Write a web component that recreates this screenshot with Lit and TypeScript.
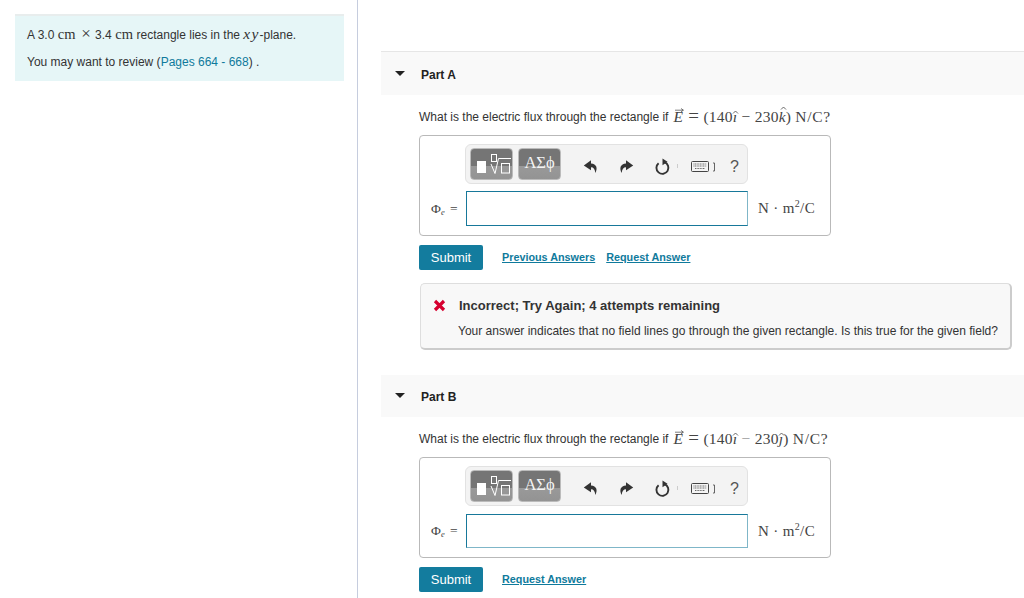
import { LitElement, html, css, svg } from "lit";
import { customElement } from "lit/decorators.js";

const undo = svg`<path d="M8 0.3 L0.8 5.6 L8 10.3 V7.2 C10.6 7.2 12 9 12.3 13 C15 8.5 13.6 3.8 8 3.6 Z" fill="#333"/>`;
const redo = svg`<path d="M7 0.3 L14.2 5.6 L7 10.3 V7.2 C4.4 7.2 3 9 2.7 13 C0 8.5 1.4 3.8 7 3.6 Z" fill="#333"/>`;

@customElement("app-root")
export class AppRoot extends LitElement {
  static styles = css`
    :host { display: block; width: 1024px; height: 598px; overflow: hidden; background: #fff; font-family: "Liberation Sans", Arial, sans-serif; font-size: 12px; color: #333; }
    .page { display: flex; height: 598px; }
    .left { box-sizing: border-box; padding: 14px 13px 0 15px; border-right: 1px solid #c6cdde; flex: none; width: 358px; }
    .intro { background: #e6f6f7; border-top: 2px solid #e8eded; height: 67px; box-sizing: border-box; padding: 11px 12px 0; line-height: 16px; }
    .intro p { margin: 0 0 11px; white-space: nowrap; }
    .m { font-family: "Liberation Serif", serif; font-size: 14.5px; line-height: 0; letter-spacing: .2px; }
    .xy { font-size: 15.5px; letter-spacing: 1.2px; }
    .times { font-family: "Liberation Serif", serif; font-size: 17px; line-height: 0; margin: 0 1px 0 2px; }
    .i { font-style: italic; }
    a { color: #0f7a9c; text-decoration: none; }
    .right { flex: 1; padding: 51px 0 0 23px; min-width: 0; }
    .head { height: 44px; box-sizing: border-box; background: #f9f9f9; border-top: 1px solid #e6e6e6; display: flex; align-items: center; padding: 2px 0 0 14px; gap: 16px; font-weight: 700; color: #222; }
    .head.b { height: 42px; border-top: 0; margin-top: 25px; }
    .tri { width: 0; height: 0; border-left: 5px solid transparent; border-right: 5px solid transparent; border-top: 5px solid #222; margin-top: -3px; }
    .body { padding-left: 38px; }
    .q { height: 40px; display: flex; align-items: center; white-space: pre; padding-top: 3px; box-sizing: border-box; }
    .q .m { font-size: 15.5px; line-height: normal; margin-left: 5px; letter-spacing: .25px; color: #444; }
    .eq { font-size: 19px; line-height: 0; margin-left: -2px; }
    .wide { letter-spacing: .7px; }
    .arrow { position: relative; display: inline-block; }
    .vec { position: absolute; left: 2px; top: 0; width: 9px; height: 4px; }
    .hat { position: relative; display: inline-block; }
    .hat svg { position: absolute; left: -1px; top: 2px; width: 7px; height: 4px; }
    .hat.tall svg { left: 1px; top: -2px; }
    .box { width: 412px; height: 101px; box-sizing: border-box; border: 1px solid #b9b9b9; border-radius: 4px; padding: 8px 0 0 45px; position: relative; }
    .tools { width: 283px; height: 40px; box-sizing: border-box; background: #f3f3f3; border: 1px solid #e2e2e2; border-radius: 6px; display: flex; align-items: center; padding: 0 0 0 4px; }
    .tbtn { width: 43px; height: 32px; flex: none; box-sizing: border-box; border-radius: 4px; border: 1px solid #bbb; background: linear-gradient(#757575 0, #757575 58%, #999 58%, #939393 100%); display: flex; align-items: center; justify-content: center; color: #f4f4f4; }
    .tbtn + .tbtn { margin-left: 5px; }
    .sym { font-family: "Liberation Serif", serif; font-size: 16.5px; margin-top: -3px; white-space: nowrap; }
    .ico { display: block; flex: none; margin-top: 5px; }
    .undo { margin-left: 22px; }
    .redo { margin-left: 21px; }
    .reload { margin-left: 21px; }
    .tick { width: 1px; height: 4px; background: #ccc; margin: 4px 0 0 6px; flex: none; }
    .kbd { margin-left: 13px; }
    .help { font-size: 16px; color: #555; margin: 5px 0 0 14px; }
    .row { display: flex; align-items: center; margin-top: 7px; height: 35px; }
    .row.b { margin-top: 8px; height: 34px; }
    .phi { width: 46px; margin-left: -34px; box-sizing: border-box; font-family: "Liberation Serif", serif; font-size: 13.5px; color: #444; white-space: pre; flex: none; }
    .phi sub { font-size: 8.5px; font-style: italic; line-height: 0; vertical-align: -2px; }
    .input { width: 282px; height: 100%; flex: none; box-sizing: border-box; border: 1px solid #17789a; border-right-color: #7fb6c8; background: #fff; margin-left: -11px; }
    .phi .e { margin-left: 2px; }
    .row.b .input { border-bottom-color: #7fb6c8; }
    .unit { font-family: "Liberation Serif", serif; font-size: 15px; margin-left: 10px; color: #444; white-space: pre; letter-spacing: .35px; }
    .unit sup { font-size: 10px; line-height: 0; }
    .actions { display: flex; align-items: center; margin-top: 9px; height: 25px; }
    .submit { width: 64px; height: 25px; background: #137c9e; color: #fff; border-radius: 2px; font-size: 13px; display: flex; align-items: center; justify-content: center; }
    .link { font-weight: 700; font-size: 10.8px; text-decoration: underline; margin: -2px 0 0 11px; }
    .link.first { margin-left: 19px; }
    .fb { margin: 13px 12px 0 1px; height: 67px; box-sizing: border-box; background: #f8f8f8; border: 1px solid #dedede; border-right: 2px solid #ccc; border-bottom: 2px solid #ccc; border-radius: 5px; padding: 13px 0 0 12px; }
    .fb .t { display: flex; align-items: center; gap: 13px; font-weight: 700; font-size: 13px; color: #333; height: 16px; }
    .fb .d { margin: 10px 0 0 25px; font-size: 12.02px; color: #333; white-space: nowrap; line-height: 16px; }
  `;

  private hat(c: string, tall = false) {
    return html`<span class="hat i ${tall ? "tall" : ""}">${c}<svg viewBox="0 0 7 4"><path d="M1 3.5 L3.5 1 L6 3.5" fill="none" stroke="#444" stroke-width=".8"/></svg></span>`;
  }

  private toolbar() {
    return html`<div class="tools">
      <div class="tbtn">
        <svg width="41" height="30" viewBox="0 0 41 30">
          <rect x="6" y="12" width="9" height="12" fill="#fff"/>
          <rect x="20.5" y="5.5" width="5" height="7" fill="none" stroke="#fff" stroke-width="1"/>
          <path d="M20 15 L24 24.5 L27.5 9.5 H40" fill="none" stroke="#fff" stroke-width="1"/>
          <rect x="30.5" y="14.5" width="8" height="9.5" fill="none" stroke="#fff" stroke-width="1"/>
        </svg>
      </div>
      <div class="tbtn"><span class="sym">ΑΣϕ</span></div>
      <svg class="ico undo" width="15" height="14" viewBox="0 0 15 14">${undo}</svg>
      <svg class="ico redo" width="15" height="14" viewBox="0 0 15 14">${redo}</svg>
      <svg class="ico reload" width="16" height="18" viewBox="0 0 16 18"><path d="M9.5 4.2 A6 6 0 1 1 3.6 5.2" fill="none" stroke="#333" stroke-width="1.9"/><path d="M7.5 0.5 L12.5 3.8 L7.5 7.2 Z" fill="#333"/></svg>
      <span class="tick"></span>
      <svg class="ico kbd" width="25" height="12" viewBox="0 0 25 12">
        <rect x=".5" y=".5" width="17" height="10" rx="1" fill="#f4f4f4" stroke="#444"/>
        <path d="M2.5 3h13M2.5 5h13M4 7.5h10" stroke="#666" stroke-width="1" stroke-dasharray="1 .6"/>
        <path d="M22 2h1.5v8H22" fill="none" stroke="#555" stroke-width=".9"/>
      </svg>
      <span class="help">?</span>
    </div>`;
  }

  private answer(b = false) {
    return html`<div class="box">
      ${this.toolbar()}
      <div class="row ${b ? "b" : ""}">
        <div class="phi">Φ<sub>e</sub> <span class="e">=</span></div>
        <div class="input"></div>
        <div class="unit">N · m<sup>2</sup>/C</div>
      </div>
    </div>`;
  }

  private question(last: unknown, minus = "#444") {
    return html`<div class="q"><span>What is the electric flux through the rectangle if</span><span class="m"><span class="arrow i" style="margin-right:3px"><svg class="vec" viewBox="0 0 9 4"><path d="M0 2.2H8M6 .5L8.5 2.2L6 3.8" fill="none" stroke="#444" stroke-width=".7"/></svg>E</span> <span class="eq">=</span> (140${this.hat("ı")} <span style="color:${minus}">−</span> 230${last}) <span class="wide">N/C?</span></span></div>`;
  }

  render() {
    return html`<div class="page">
      <div class="left">
        <div class="intro">
          <p>A 3.0 <span class="m">cm</span> <span class="times">×</span> 3.4 <span class="m">cm</span> rectangle lies in the <span class="m i xy">xy</span>-plane.</p>
          <p>You may want to review (<a>Pages 664 - 668</a>) .</p>
        </div>
      </div>
      <div class="right">
        <div class="head"><span class="tri"></span><span>Part A</span></div>
        <div class="body">
          ${this.question(this.hat("k", true))}
          ${this.answer()}
          <div class="actions"><div class="submit">Submit</div><a class="link first">Previous Answers</a><a class="link">Request Answer</a></div>
          <div class="fb">
            <div class="t"><svg width="13" height="13" viewBox="0 0 13 13"><path d="M2 2 L11 11 M11 2 L2 11" stroke="#d6002f" stroke-width="3.2"/></svg><span>Incorrect; Try Again; 4 attempts remaining</span></div>
            <div class="d">Your answer indicates that no field lines go through the given rectangle. Is this true for the given field?</div>
          </div>
        </div>
        <div class="head b"><span class="tri"></span><span>Part B</span></div>
        <div class="body">
          ${this.question(this.hat("ȷ"), "#999")}
          ${this.answer(true)}
          <div class="actions"><div class="submit">Submit</div><a class="link first">Request Answer</a></div>
        </div>
      </div>
    </div>`;
  }
}
